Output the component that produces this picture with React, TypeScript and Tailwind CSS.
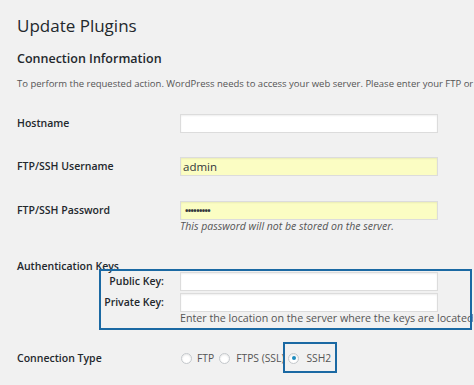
import React from "react";

function Field({ label, children }: { label: string; children: React.ReactNode }) {
  return (
    <div className="flex items-center h-[19px]">
      <div className="w-[163px] text-[10.5px] font-semibold text-[#23282d] leading-none">{label}</div>
      {children}
    </div>
  );
}

function Input({ yellow, children }: { yellow?: boolean; children?: React.ReactNode }) {
  return (
    <div
      className={
        "w-[258px] h-[19px] border border-[#dcdcdc] shadow-[inset_0_1px_2px_rgba(0,0,0,0.07)] flex items-center pl-[2px] text-[11.5px] text-[#32373c] " +
        (yellow ? "bg-[#fbfdc3]" : "bg-white")
      }
    >
      {children}
    </div>
  );
}

function Radio({ checked }: { checked?: boolean }) {
  return (
    <span className="inline-flex items-center justify-center w-[11px] h-[11px] rounded-full border border-[#c4c8cc] bg-white shadow-[inset_0_1px_2px_rgba(0,0,0,0.1)]">
      {checked && <span className="w-[4px] h-[4px] rounded-full bg-[#1e8cbe]" />}
    </span>
  );
}

export default function App() {
  return (
    <div className="relative w-[474px] h-[385px] overflow-hidden bg-[#f1f1f1] pl-[17px] font-['Open_Sans',sans-serif] text-[#23282d]">
      <div className="h-[13px]" />
      <h1 className="h-[24px] flex items-center text-[17px] leading-none font-normal">Update Plugins</h1>
      <div className="h-[13px]" />
      <h2 className="h-[18px] flex items-center text-[12.5px] leading-none font-semibold">Connection Information</h2>
      <div className="h-[9px]" />
      <p className="h-[14px] flex items-center text-[9.5px] leading-none text-[#555] whitespace-nowrap">
        To perform the requested action. WordPress needs to access your web server. Please enter your FTP or SSH credentials to proceed.
      </p>
      <div className="h-[23px]" />
      <Field label="Hostname">
        <Input />
      </Field>
      <div className="h-[24px]" />
      <Field label="FTP/SSH Username">
        <Input yellow>admin</Input>
      </Field>
      <div className="h-[25px]" />
      <Field label="FTP/SSH Password">
        <Input yellow>
          <span className="text-[9px] font-bold tracking-[-0.6px] pl-[2px]">•••••••••</span>
        </Input>
      </Field>
      <div className="h-[12px] pl-[163px] flex items-center text-[10.5px] italic text-[#555] leading-none">
        This password will not be stored on the server.
      </div>
      <div className="h-[29px]" />
      <div className="h-[11px] flex items-center text-[10.5px] font-semibold leading-none">Authentication Keys</div>
      <div className="flex items-center h-[19px]">
        <div className="w-[147px] text-right text-[10.5px] font-semibold leading-none">Public Key:</div>
        <div className="w-[16px]" />
        <Input />
      </div>
      <div className="h-[2px]" />
      <div className="flex items-center h-[19px]">
        <div className="w-[147px] text-right text-[10.5px] font-semibold leading-none">Private Key:</div>
        <div className="w-[16px]" />
        <Input />
      </div>
      <div className="h-[12px] pl-[163px] flex items-center text-[10.7px] text-[#555] leading-none whitespace-nowrap">
        Enter the location on the server where the keys are located. If a passphrase is needed, enter that in the password field above.
      </div>
      <div className="h-[24px]" />
      <div className="flex items-center h-[20px]">
        <div className="w-[164px] text-[10.5px] font-semibold leading-none">Connection Type</div>
        <div className="flex items-center text-[10.3px] text-[#555] leading-none">
          <Radio />
          <span className="ml-[5px] mr-[5px]">FTP</span>
          <Radio />
          <span className="ml-[6px] mr-[4px]">FTPS (SSL)</span>
          <Radio checked />
          <span className="ml-[7px]">SSH2</span>
        </div>
      </div>

      <div className="absolute left-[99px] top-[269px] w-[373px] h-[61px] border-2 border-[#1b69a3]" />
      <div className="absolute left-[283px] top-[342px] w-[54px] h-[31px] border-2 border-[#1b69a3]" />
    </div>
  );
}
